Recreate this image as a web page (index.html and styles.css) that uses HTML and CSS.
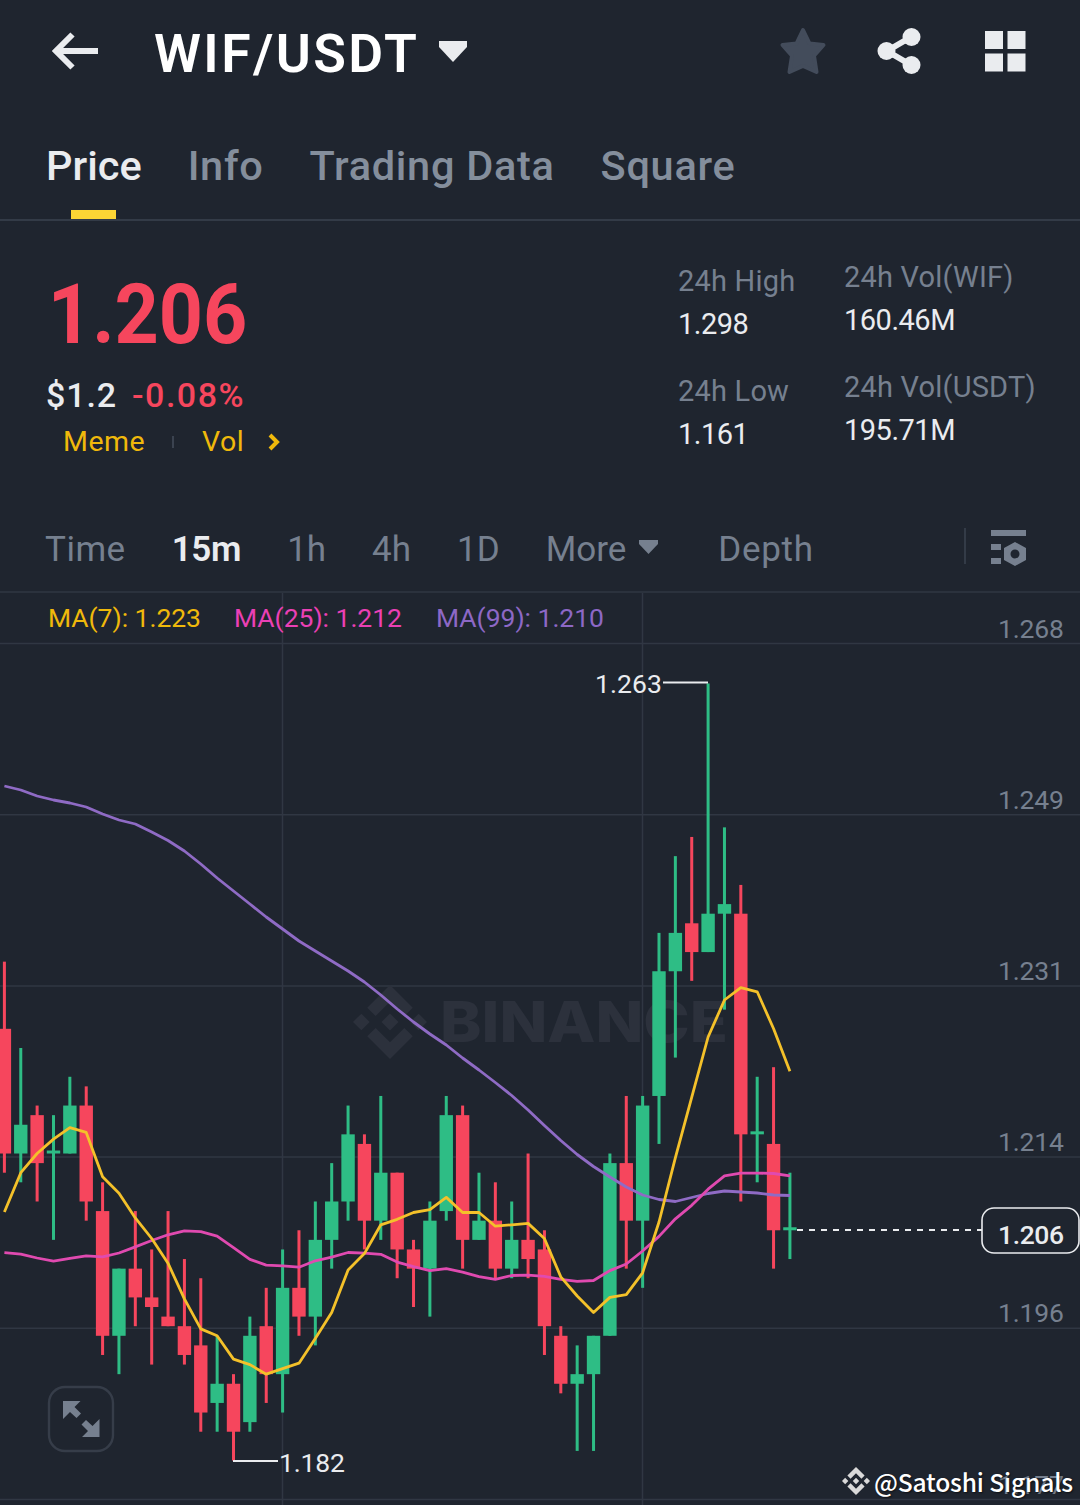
FILE: index.html
```html
<!DOCTYPE html>
<html lang="en">
<head>
    <meta charset="UTF-8">
    <meta name="viewport" content="width=device-width, initial-scale=1.0">
    <title>WIF/USDT</title>
    <link rel="stylesheet" href="styles.css">
</head>
<body>
    <header class="header">
        <svg class="back-icon" width="46" height="38" viewBox="0 0 46 38">
            <path d="M20.500 2.500L4 19l16.500 16.500M4 19h42" fill="none" stroke="#eaecef" stroke-width="6"/>
        </svg>
        <h1 class="pair">WIF/USDT</h1>
        <svg class="pair-arrow" width="28" height="21" viewBox="0 0 28 21">
            <path d="M0 0h28v6L14 21 0 6z" fill="#eaecef"/>
        </svg>
        <div class="header-actions">
            <svg width="46" height="48" viewBox="0 0 46 48">
                <path d="M23 3l6.500 13.500L43.500 18 34 28.800 36.500 45 23 39 9.500 45 12 28.800 2.500 18l14-1.500z" fill="#434c5b" stroke="#434c5b" stroke-width="4" stroke-linejoin="round"/>
            </svg>
            <svg width="44" height="48" viewBox="0 0 44 48">
                <path d="M34 10L10 24l24 14" fill="none" stroke="#eaecef" stroke-width="6"/>
                <circle cx="34.500" cy="10" r="9"/>
                <circle cx="9.500" cy="24" r="9"/>
                <circle cx="34.500" cy="38" r="9"/>
            </svg>
            <svg width="40" height="40" viewBox="0 0 40 40">
                <path d="M0 0h18v18H0zM22.500 0h18v18h-18zM0 22.500h18v18H0zM22.500 22.500h18v18h-18z"/>
            </svg>
        </div>
    </header>

    <nav class="tabs">
        <a class="tab active">Price</a>
        <a class="tab">Info</a>
        <a class="tab">Trading Data</a>
        <a class="tab">Square</a>
    </nav>

    <section class="summary">
        <div class="quote">
            <div class="last-price">1.206</div>
            <div class="change"><span class="fiat">$1.2</span><span class="percent">-0.08%</span></div>
            <div class="tags">
                <span>Meme</span>
                <i class="tag-line"></i>
                <span>Vol</span>
                <svg width="12" height="18" viewBox="0 0 12 18">
                    <path d="M2 2l7 7-7 7" fill="none" stroke="#f0b90b" stroke-width="4"/>
                </svg>
            </div>
        </div>
        <div class="stats">
            <div class="stat"><span class="label">24h High</span><span class="value">1.298</span></div>
            <div class="stat"><span class="label">24h Low</span><span class="value">1.161</span></div>
        </div>
        <div class="stats stats-volume">
            <div class="stat"><span class="label">24h Vol(WIF)</span><span class="value">160.46M</span></div>
            <div class="stat"><span class="label">24h Vol(USDT)</span><span class="value">195.71M</span></div>
        </div>
    </section>

    <nav class="intervals">
        <span class="time">Time</span>
        <span class="current">15m</span>
        <span>1h</span>
        <span>4h</span>
        <span>1D</span>
        <span class="more">More
            <svg width="19" height="14" viewBox="0 0 19 14"><path d="M0 0h19v4L9.500 14 0 4z" fill="#76808f"/></svg>
        </span>
        <span class="depth">Depth</span>
        <div class="chart-settings">
            <svg width="36" height="37" viewBox="0 0 36 37">
                <path d="M0 0h35v6H0zM0 14h10v6H0zM0 28h10v6H0z" fill="#76808f"/>
                <path fill-rule="evenodd" d="M24 12l11 6v12l-11 6-11-6V18zM24 19.500a4.500 4.500 0 1 0 0 9 4.500 4.500 0 1 0 0-9z" fill="#76808f"/>
            </svg>
        </div>
    </nav>

    <main class="chart">
        <svg id="chart" width="1080" height="912" viewBox="0 593 1080 912">
            <g id="grid"></g>
            <g class="watermark">
                <path transform="translate(353 985) scale(.5845)" d="M38.700 53.200l24.600-24.600 24.600 24.600 14.300-14.300L63.300 0 24.400 38.900zM0 63.300L14.300 49l14.300 14.300-14.300 14.300zM38.700 73.400l24.600 24.600 24.600-24.600 14.300 14.300-38.900 38.900-38.900-38.900zM98 63.300L112.300 49l14.300 14.300-14.300 14.300zM77.800 63.300L63.300 48.800 48.800 63.300l14.500 14.500z"/>
                <text x="440" y="1042" textLength="288" lengthAdjust="spacingAndGlyphs">BINANCE</text>
            </g>
            <g id="candles"></g>
            <g id="lines"></g>
            <g class="legend">
                <text class="ma7" x="48" y="627" textLength="153">MA(7): 1.223</text>
                <text class="ma25" x="234" y="627" textLength="168">MA(25): 1.212</text>
                <text class="ma99" x="436" y="627" textLength="168">MA(99): 1.210</text>
            </g>
            <g class="extreme">
                <path d="M663 682.500h45M233 1461h45"/>
                <text x="595" y="693" textLength="67">1.263</text>
                <text x="279" y="1472" textLength="66">1.182</text>
            </g>
            <g id="axis"></g>
            <g class="last">
                <path d="M797 1230h185" stroke-dasharray="6"/>
                <rect x="982" y="1208" width="97" height="45" rx="12"/>
                <text x="998" y="1244" textLength="66">1.206</text>
            </g>
            <g class="expand">
                <rect x="49" y="1387" width="64" height="64" rx="16"/>
                <path d="M63 1401h17.500l-6 6 6.500 6.500-4.500 4.500-6.500-6-7 7zM99.500 1437h-17.500l6-6-6.500-6.500 4.500-4.500 6.500 6 7-7z"/>
            </g>
        </svg>
        <div class="credit">
            <svg width="28" height="28" viewBox="0 0 126.600 126.600">
                <path d="M38.700 53.200l24.600-24.600 24.600 24.600 14.300-14.300L63.300 0 24.400 38.900zM0 63.300L14.300 49l14.300 14.300-14.300 14.300zM38.700 73.400l24.600 24.600 24.600-24.600 14.300 14.300-38.900 38.900-38.900-38.900zM98 63.300L112.300 49l14.300 14.300-14.300 14.300zM77.800 63.300L63.300 48.800 48.800 63.300l14.500 14.500z"/>
            </svg>
            <span>@Satoshi Signals</span>
        </div>
    </main>

    <script src="chart.js"></script>
</body>
</html>
```

FILE: styles.css
```css
* {
    box-sizing: border-box;
}
body {
    margin: 0;
    width: 1080px;
    height: 1505px;
    overflow: hidden;
    background-color: #1f252f;
    color: #eaecef;
    font-family: Roboto, "Liberation Sans", sans-serif;
}
svg {
    display: block;
    flex-shrink: 0;
}

/* Header */
.header {
    display: flex;
    align-items: center;
    height: 103px;
    padding: 0 55px 1px 52px;
}
.pair {
    margin: 5px 0 0 56px;
    font-size: 53.5px;
    line-height: 60px;
    font-weight: 600;
    letter-spacing: 2.4px;
    color: #fff;
}
.pair-arrow {
    margin-left: 20px;
}
.header-actions {
    display: flex;
    align-items: center;
    margin-left: auto;
    fill: #eaecef;
}
.header-actions svg {
    margin-left: 51px;
    overflow: visible;
}
.header-actions svg:last-child {
    margin-left: 64px;
}

/* Tabs */
.tabs {
    display: flex;
    gap: 46px;
    height: 118px;
    padding-left: 46px;
    border-bottom: 2px solid #333b47;
}
.tab {
    position: relative;
    height: 116px;
    font-size: 41.5px;
    line-height: 125px;
    font-weight: 500;
    letter-spacing: 0.7px;
    color: #848e9c;
}
.tab.active {
    letter-spacing: 0;
    color: #eaecef;
}
.tab.active::after {
    content: "";
    position: absolute;
    left: 25px;
    bottom: 0;
    width: 45px;
    height: 9px;
    background-color: #fcd535;
}

/* Price summary */
.summary {
    display: flex;
    height: 281px;
    padding: 0 0 0 46px;
}
.quote {
    width: 632px;
    padding-top: 52px;
}
.last-price {
    height: 83px;
    padding-left: 2px;
    font-size: 83px;
    line-height: 83px;
    font-weight: 700;
    color: #f6465d;
    transform: scaleX(0.93);
    transform-origin: left;
}
.change {
    display: flex;
    gap: 15px;
    margin-top: 16px;
    font-size: 34px;
    line-height: 46px;
    font-weight: 500;
    letter-spacing: 0.9px;
}
.percent {
    color: #f6465d;
    letter-spacing: 1.5px;
}
.tags {
    display: flex;
    align-items: center;
    padding-left: 17px;
    font-size: 28.5px;
    line-height: 48px;
    letter-spacing: 0.5px;
    color: #f0b90b;
}
.tag-line {
    width: 2px;
    height: 12px;
    margin: 0 28px 0 27px;
    background-color: #3b4350;
}
.tags svg {
    margin-left: 24px;
}
.stats {
    width: 166px;
    padding-top: 39px;
}
.stats-volume {
    width: 220px;
    padding-top: 35px;
}
.stat {
    margin-bottom: 24px;
    font-size: 29px;
    line-height: 43px;
}
.stat span {
    display: block;
}
.label {
    letter-spacing: 0.2px;
    color: #76808f;
}
.value {
    letter-spacing: -0.5px;
}

/* Interval bar */
.intervals {
    display: flex;
    gap: 46px;
    height: 91px;
    padding-left: 45px;
    border-bottom: 2px solid #2b323d;
    font-size: 35px;
    line-height: 95px;
    color: #76808f;
}
.intervals .time {
    letter-spacing: 0.5px;
}
.intervals .current {
    font-weight: 600;
    letter-spacing: -0.3px;
    color: #eaecef;
}
.more {
    display: flex;
    align-items: center;
    gap: 13px;
    height: 95px;
}
.more svg {
    margin-bottom: 5px;
}
.depth {
    margin-left: 14px;
    letter-spacing: 0.7px;
}
.chart-settings {
    height: 36px;
    margin: 26px 53px 0 auto;
    padding: 2px 0 0 25px;
    border-left: 2px solid #333b47;
}

/* Chart */
.chart {
    position: relative;
    height: 912px;
}
.chart text {
    font-size: 26.5px;
    white-space: pre;
}
#grid {
    stroke: #303743;
    stroke-width: 1.5;
}
.watermark {
    fill: #2c313c;
}
.chart .watermark text {
    font-family: Inter, sans-serif;
    font-size: 56px;
    font-weight: 800;
}
#candles .up {
    fill: #2ebd85;
}
#candles .down {
    fill: #f6465d;
}
#lines polyline {
    fill: none;
    stroke-width: 2.8;
    stroke-linejoin: round;
}
.ma7 { fill: #f0b90b; }
.ma25 { fill: #eb40b5; }
.ma99 { fill: #8d68c6; }
#lines .line7 { stroke: #f4c12a; }
#lines .line25 { stroke: #e04ab0; }
#lines .line99 { stroke: #8f6bc5; }
.extreme, .last {
    fill: #eaecef;
}
.extreme path, .last path {
    stroke: #eaecef;
    stroke-width: 1.8;
}
.last rect {
    fill: #1f252f;
    stroke: #eaecef;
    stroke-width: 1.6;
}
.last text {
    font-weight: 500;
}
#axis {
    fill: #76808f;
}
.expand rect {
    fill: #1f252f;
    stroke: #363d49;
    stroke-width: 2.4;
}
.expand path {
    fill: #76808f;
}
.credit {
    position: absolute;
    right: 7px;
    bottom: 5px;
    display: flex;
    align-items: center;
    gap: 4px;
    font-family: "Noto Sans CJK SC", sans-serif;
    font-size: 24.6px;
    font-weight: 500;
    line-height: 38px;
    letter-spacing: -0.15px;
    color: #fff;
    fill: #d9d9d9;
    text-shadow: 1px 1px 2px rgba(0, 0, 0, 0.6);
}
```

FILE: chart.js
```javascript
// open, high, low, close in thousandths of a USDT
const candles = [
    [1227, 1234, 1212, 1214], [1214, 1225, 1211, 1217], [1218, 1219, 1209, 1213], [1214, 1218, 1205, 1214],
    [1214, 1222, 1214, 1219], [1219, 1221, 1207, 1209], [1208, 1211, 1193, 1195], [1195, 1202, 1191, 1202],
    [1202, 1208, 1196, 1199], [1199, 1204, 1192, 1198], [1197, 1208, 1196, 1196], [1196, 1203, 1192, 1193],
    [1194, 1201, 1185, 1187], [1188, 1195, 1185, 1190], [1190, 1191, 1182, 1185], [1186, 1197, 1185, 1195],
    [1196, 1200, 1188, 1191], [1191, 1204, 1187, 1200], [1200, 1206, 1195, 1197], [1197, 1209, 1194, 1205],
    [1205, 1213, 1202, 1209], [1209, 1219, 1207, 1216], [1215, 1216, 1204, 1207], [1207, 1220, 1205, 1212],
    [1212, 1212, 1201, 1204], [1204, 1205, 1198, 1202], [1202, 1209, 1197, 1207], [1208, 1220, 1207, 1218],
    [1218, 1219, 1202, 1205], [1205, 1212, 1205, 1207], [1207, 1211, 1201, 1202], [1202, 1209, 1201, 1205],
    [1205, 1214, 1201, 1203], [1204, 1206, 1193, 1196], [1195, 1196, 1189, 1190], [1190, 1194, 1183, 1191],
    [1191, 1195, 1183, 1195], [1195, 1214, 1195, 1213], [1213, 1220, 1202, 1207], [1207, 1220, 1200, 1219],
    [1220, 1237, 1215, 1233], [1233, 1245, 1224, 1237], [1238, 1247, 1232, 1235], [1235, 1263, 1235, 1239],
    [1239, 1248, 1229, 1240], [1239, 1242, 1209, 1216], [1216, 1222, 1211, 1216], [1215, 1223, 1202, 1206],
    [1206, 1212, 1203, 1206]
];

// average values for the candles that have too little history on screen
const ma7Start = [1207.9, 1212, 1214, 1215.5, 1216.7, 1216.2];
const ma25Start = [
    1203.67, 1203.52, 1203.11, 1202.78, 1203.07, 1203.33, 1203.23, 1203.63, 1204.27, 1204.93, 1205.53, 1205.93,
    1205.86, 1205.38, 1204.19, 1202.96, 1202.37, 1202.29, 1202.15, 1202.82, 1203.19, 1203.68, 1203.61, 1203.5
];
// plot heights
const ma99 = [
    786, 790, 796, 800, 803, 807, 814, 820, 824, 832, 840.5, 851, 864, 878, 891, 904, 917, 929, 941, 951, 961, 971,
    982, 995, 1009, 1022, 1034, 1045, 1058, 1070, 1082.5, 1095.5, 1110, 1125.5, 1140.5, 1154.5, 1166.5, 1177, 1187,
    1195, 1199.5, 1201.5, 1197.5, 1193.5, 1191, 1192, 1193, 1195, 1195.5
];

const x = i => 4.4 + i * 16.365;
const y = price => 1460.5 - (price - 1182) * 9.593;

function average(count, start) {
    return candles.map((candle, i) => {
        if (i < start.length) return y(start[i]);
        let sum = 0;
        for (let k = i - count + 1; k <= i; k++) sum += candles[k][3];
        return y(sum / count);
    });
}

function polyline(name, values) {
    const points = values.map((value, i) => `${x(i).toFixed(1)},${value.toFixed(1)}`).join(' ');
    return `<polyline class="${name}" points="${points}"/>`;
}

const axisLabels = ['1.268', '1.249', '1.231', '1.214', '1.196', '1.177'];
let grid = '<path d="M282.5 593V1505M642.5 593V1505"/>';
let axis = '';
axisLabels.forEach((label, i) => {
    const top = 643.5 + i * 171.2;
    grid += `<path d="M0 ${top}H1080"/>`;
    axis += `<text x="998" y="${top - 6}" textLength="66">${label}</text>`;
});
document.getElementById('grid').innerHTML = grid;
document.getElementById('axis').innerHTML = axis;

document.getElementById('candles').innerHTML = candles.map(([open, high, low, close], i) => {
    const height = Math.max(Math.abs(y(open) - y(close)), 3);
    const bottom = y(Math.min(open, close));
    return `<g class="${close < open ? 'down' : 'up'}">
        <rect x="${x(i) - 1.5}" y="${y(high)}" width="3" height="${y(low) - y(high)}"/>
        <rect x="${x(i) - 6.7}" y="${bottom - height}" width="13.4" height="${height}"/>
    </g>`;
}).join('');

document.getElementById('lines').innerHTML =
    polyline('line99', ma99) +
    polyline('line25', average(25, ma25Start)) +
    polyline('line7', average(7, ma7Start));
```
